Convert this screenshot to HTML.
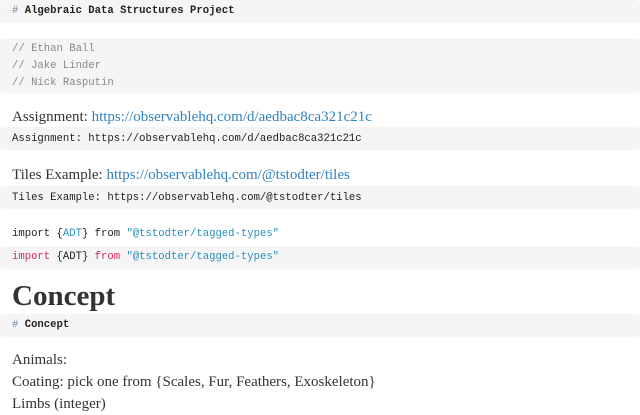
<!DOCTYPE html>
<html><head><style>
body{margin:0;width:640px;height:400px;overflow:hidden;background:#fff;position:relative}
.b{position:absolute;left:0;width:640px;background:#f5f5f5;border-radius:4px}
.m{position:absolute;left:12px;font-family:"Liberation Mono",monospace;font-size:10.6px;color:#222;white-space:pre;line-height:17px}
.s{position:absolute;left:12px;font-family:"Liberation Serif",serif;font-size:15px;color:#333;white-space:pre;line-height:22px}
a{color:#3182bd;text-decoration:none}
.h{color:#6b8fb5}
.c{color:#888}
.k{color:#d02670}
.st{color:#2a8fb8}
</style></head><body>
<div class="b" style="top:0;height:23px"></div>
<div class="m" style="top:3px"><span class="h">#</span> <b>Algebraic Data Structures Project</b></div>
<div class="b" style="top:38px;height:55px"></div>
<div class="m c" style="top:41px">// Ethan Ball
// Jake Linder
// Nick Rasputin</div>
<div class="s" style="top:106px">Assignment: <a>https://observablehq.com/d/aedbac8ca321c21c</a></div>
<div class="b" style="top:127px;height:23px"></div>
<div class="m" style="top:131px">Assignment: https://observablehq.com/d/aedbac8ca321c21c</div>
<div class="s" style="top:164px">Tiles Example: <a>https://observablehq.com/@tstodter/tiles</a></div>
<div class="b" style="top:186px;height:23px"></div>
<div class="m" style="top:190px">Tiles Example: https://observablehq.com/@tstodter/tiles</div>
<div class="m" style="top:226px">import {<span class="st">ADT</span>} from <span class="st">"@tstodter/tagged-types"</span></div>
<div class="b" style="top:246px;height:23px"></div>
<div class="m" style="top:249px"><span class="k">import</span> {ADT} <span class="k">from</span> <span class="st">"@tstodter/tagged-types"</span></div>
<div class="s" style="top:279px;font-size:29px;font-weight:bold;line-height:34px">Concept</div>
<div class="b" style="top:314px;height:23px"></div>
<div class="m" style="top:317px"><span class="h">#</span> <b>Concept</b></div>
<div class="s" style="top:349px">Animals:
Coating: pick one from {Scales, Fur, Feathers, Exoskeleton}
Limbs (integer)</div>
</body></html>
